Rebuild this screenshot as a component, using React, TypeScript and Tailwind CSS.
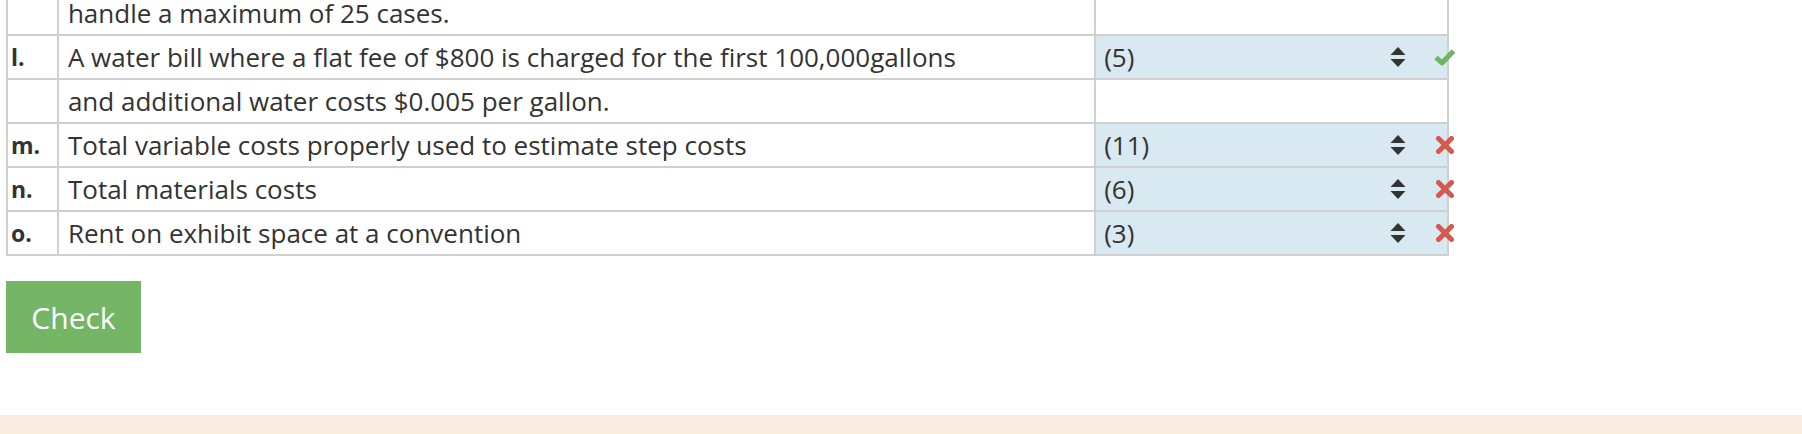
import React from "react";

type Row = {
  label: string;
  text: string;
  answer?: string;
  status?: "ok" | "bad";
};

const rows: Row[] = [
  { label: "", text: "handle a maximum of 25 cases." },
  { label: "l.", text: "A water bill where a flat fee of $800 is charged for the first 100,000gallons", answer: "(5)", status: "ok" },
  { label: "", text: "and additional water costs $0.005 per gallon." },
  { label: "m.", text: "Total variable costs properly used to estimate step costs", answer: "(11)", status: "bad" },
  { label: "n.", text: "Total materials costs", answer: "(6)", status: "bad" },
  { label: "o.", text: "Rent on exhibit space at a convention", answer: "(3)", status: "bad" },
];

function SortIcon() {
  return (
    <svg width="16" height="20" viewBox="0 0 16 20" className="text-[#333]">
      <path d="M8 0 L15.5 8 L0.5 8 Z" fill="currentColor" />
      <path d="M0.5 12 L15.5 12 L8 20 Z" fill="currentColor" />
    </svg>
  );
}

function OkIcon() {
  return (
    <svg width="23" height="18" viewBox="0 0 23 18">
      <polyline points="3,9.5 9,15 20.5,3" fill="none" stroke="#6db55f" strokeWidth="5" strokeLinejoin="round" />
    </svg>
  );
}

function BadIcon() {
  return (
    <svg width="18" height="18" viewBox="0 0 18 18">
      <path d="M2.5 2.5 L15.5 15.5 M15.5 2.5 L2.5 15.5" stroke="#d6594f" strokeWidth="5" strokeLinecap="round" />
    </svg>
  );
}

export default function App() {
  return (
    <div className="w-[1802px] h-[434px] overflow-hidden bg-white font-['Open_Sans',sans-serif] text-[#333] flex flex-col">
      <div className="pl-[6px] -mt-[10px]">
        <table className="border-collapse w-[1443px] text-[26px] leading-none">
          <colgroup>
            <col className="w-[51px]" />
            <col className="w-[1038px]" />
            <col className="w-[354px]" />
          </colgroup>
          <tbody>
            {rows.map((r, i) => (
              <tr key={i} className="h-[44px]">
                <td className="border-2 border-[#d0d0d0] px-[3px] text-[23px] font-bold">{r.label}</td>
                <td className="border-2 border-[#d0d0d0] pl-[9px] whitespace-nowrap">{r.text}</td>
                <td className={`border-2 border-[#d0d0d0] p-0 relative ${r.answer ? "bg-[#d9e9f1]" : ""}`}>
                  {r.answer && (
                    <div className="flex items-center justify-between pl-[8px] pr-[41px]">
                      <span>{r.answer}</span>
                      <SortIcon />
                    </div>
                  )}
                  {r.status === "ok" && (
                    <span className="absolute right-[-9px] top-1/2 -translate-y-1/2 flex">
                      <OkIcon />
                    </span>
                  )}
                  {r.status === "bad" && (
                    <span className="absolute right-[-7px] top-1/2 -translate-y-1/2 flex">
                      <BadIcon />
                    </span>
                  )}
                </td>
              </tr>
            ))}
          </tbody>
        </table>
        <button className="mt-[25px] w-[135px] h-[72px] bg-[#74b566] text-white text-[30px] flex items-center justify-center">
          Check
        </button>
      </div>
      <div className="mt-auto h-[19px] bg-[#faecde]" />
    </div>
  );
}
